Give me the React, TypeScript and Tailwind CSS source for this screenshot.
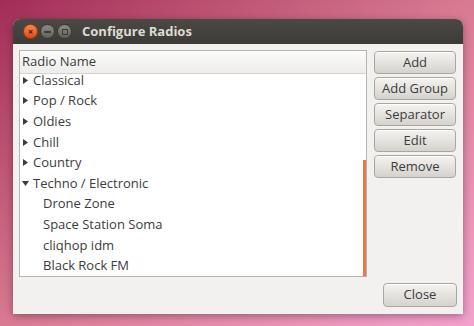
const groups = ["Classical", "Pop / Rock", "Oldies", "Chill", "Country"];
const stations = ["Drone Zone", "Space Station Soma", "cliqhop idm", "Black Rock FM"];
const actions = ["Add", "Add Group", "Separator", "Edit", "Remove"];

const Arrow = ({ open }: { open?: boolean }) => (
  <svg width="7" height="7" viewBox="0 0 7 7" className="shrink-0">
    {open ? <path d="M0 1 L7 1 L3.5 6 Z" fill="#3c3c3c" /> : <path d="M1 0 L6 3.5 L1 7 Z" fill="#3c3c3c" />}
  </svg>
);

const GtkButton = ({ label, className = "" }: { label: string; className?: string }) => (
  <button className={`h-[23px] rounded-[4px] border border-[#a9a6a0] bg-gradient-to-b from-[#f4f3f1] to-[#d6d3ce] text-[13px] text-[#3c3c3c] shadow-[inset_0_1px_0_#fff] ${className}`}>
    {label}
  </button>
);

export default function App() {
  return (
    <div
      className="w-[474px] h-[326px] overflow-hidden bg-gradient-to-br from-[#a22c58] via-[#d97a92] to-[#f4a2cd] pt-[19px] pl-[13px]"
      style={{ fontFamily: '"Open Sans", "DejaVu Sans", sans-serif' }}
    >
      <div className="w-[450px] h-[295px] flex flex-col bg-[#f2f1f0] rounded-t-[7px] overflow-hidden shadow-[0_2px_8px_rgba(0,0,0,0.35)]">
        {/* title bar */}
        <div className="h-[25px] shrink-0 flex items-center bg-gradient-to-b from-[#4a4945] to-[#3c3b37] pl-[10px]">
          <div className="flex items-center gap-[2px]">
            <span className="w-[15px] h-[15px] rounded-full bg-gradient-to-b from-[#f7854f] to-[#df4a16] border border-[#a23a12] flex items-center justify-center text-[9px] leading-none font-bold text-[#3a1a0a]">
              ×
            </span>
            <span className="w-[15px] h-[15px] rounded-full bg-gradient-to-b from-[#8d8b85] to-[#63615b] border border-[#3a3935] flex items-center justify-center">
              <span className="w-[7px] h-[2px] bg-[#3c3b37] rounded" />
            </span>
            <span className="w-[15px] h-[15px] rounded-full bg-gradient-to-b from-[#8d8b85] to-[#63615b] border border-[#3a3935] flex items-center justify-center">
              <span className="w-[6px] h-[6px] border border-[#3c3b37]" />
            </span>
          </div>
          <span className="ml-[10px] text-[13px] font-bold text-[#dfdbd2]">Configure Radios</span>
        </div>

        {/* body */}
        <div className="flex-1 flex flex-col pt-[6px] pl-[6px] pr-[6px] pb-[6px]">
          <div className="flex gap-[7px]">
            <div className="w-[348px] h-[227px] border border-[#b8b5b0] bg-white flex flex-col overflow-hidden">
              <div className="h-[23px] shrink-0 flex items-center pl-[2px] border-b border-[#d5d2cd] bg-gradient-to-b from-[#fbfbfa] to-[#eeedeb] text-[13px] text-[#3c3c3c]">
                Radio Name
              </div>
              <div className="flex-1 flex">
                <div className="flex-1 flex flex-col -mt-[4px] text-[13px] text-[#3c3c3c]">
                  {groups.map((g) => (
                    <div key={g} className="h-[20.6px] flex items-center pl-[2px] gap-[4px] leading-none">
                      <Arrow />
                      <span>{g}</span>
                    </div>
                  ))}
                  <div className="h-[20.6px] flex items-center pl-[2px] gap-[4px] leading-none">
                    <Arrow open />
                    <span>Techno / Electronic</span>
                  </div>
                  {stations.map((s) => (
                    <div key={s} className="h-[20.6px] flex items-center pl-[23px] leading-none">
                      {s}
                    </div>
                  ))}
                </div>
                <div className="w-[3px] flex flex-col">
                  <div className="h-[86px]" />
                  <div className="flex-1 bg-[#e8774a]" />
                </div>
              </div>
            </div>
            <div className="w-[82px] flex flex-col gap-[3px] pt-[1px]">
              {actions.map((a) => (
                <GtkButton key={a} label={a} />
              ))}
            </div>
          </div>
          <div className="flex justify-end mt-[6px]">
            <GtkButton label="Close" className="w-[74px] h-[24px]" />
          </div>
        </div>
      </div>
    </div>
  );
}
